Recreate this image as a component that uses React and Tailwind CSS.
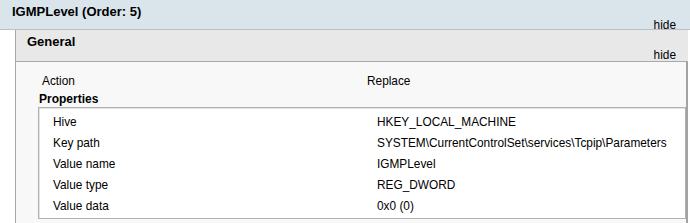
const rows = [
  ['Hive', 'HKEY_LOCAL_MACHINE'],
  ['Key path', 'SYSTEM\\CurrentControlSet\\services\\Tcpip\\Parameters'],
  ['Value name', 'IGMPLevel'],
  ['Value type', 'REG_DWORD'],
  ['Value data', '0x0 (0)'],
]

export default function App() {
  return (
    <div className="w-[690px] h-[223px] bg-white text-black text-[11.85px] overflow-hidden" style={{ fontFamily: '"Liberation Sans", Arial, sans-serif' }}>
      {/* Item header */}
      <div className="h-[30px] bg-[#d9e4eb] border-b border-[#b9c0c6] flex flex-col justify-between pl-[12px] pr-[14px] pt-[4px]">
        <div className="font-bold text-[13px] leading-[15px]">IGMPLevel (Order: 5)</div>
        <div className="self-end leading-[12px]">hide</div>
      </div>

      <div className="pl-[15px] pr-[2px]">
        <div className="border-l border-[#a8a8a8]">
          {/* General header */}
          <div className="h-[32px] bg-[#e8e8e8] border-b border-[#a9a9a9] flex flex-col justify-between pl-[11px] pr-[12px] pt-[4px]">
            <div className="font-bold text-[13px] leading-[15px]">General</div>
            <div className="self-end leading-[12px]">hide</div>
          </div>

          {/* Content */}
          <div className="bg-[#f8f8f8] border-r-2 border-[#a3a3a3] pt-[9px] h-[162px]">
            <div className="flex h-[21px] items-center pl-[26px]">
              <span className="w-[325px]">Action</span>
              <span>Replace</span>
            </div>
            <div className="pl-[23px] font-bold text-[12px] leading-[15px]">Properties</div>
            <div className="ml-[22px] bg-white border border-[#b0b0b0] shadow-[inset_1px_1px_0_#e4e4e4] pt-[4px] pb-[1px]">
              {rows.map(([k, v]) => (
                <div key={k} className="flex h-[21px] items-center pl-[14px]">
                  <span className="w-[324px]">{k}</span>
                  <span>{v}</span>
                </div>
              ))}
            </div>
          </div>
        </div>
      </div>
    </div>
  )
}
